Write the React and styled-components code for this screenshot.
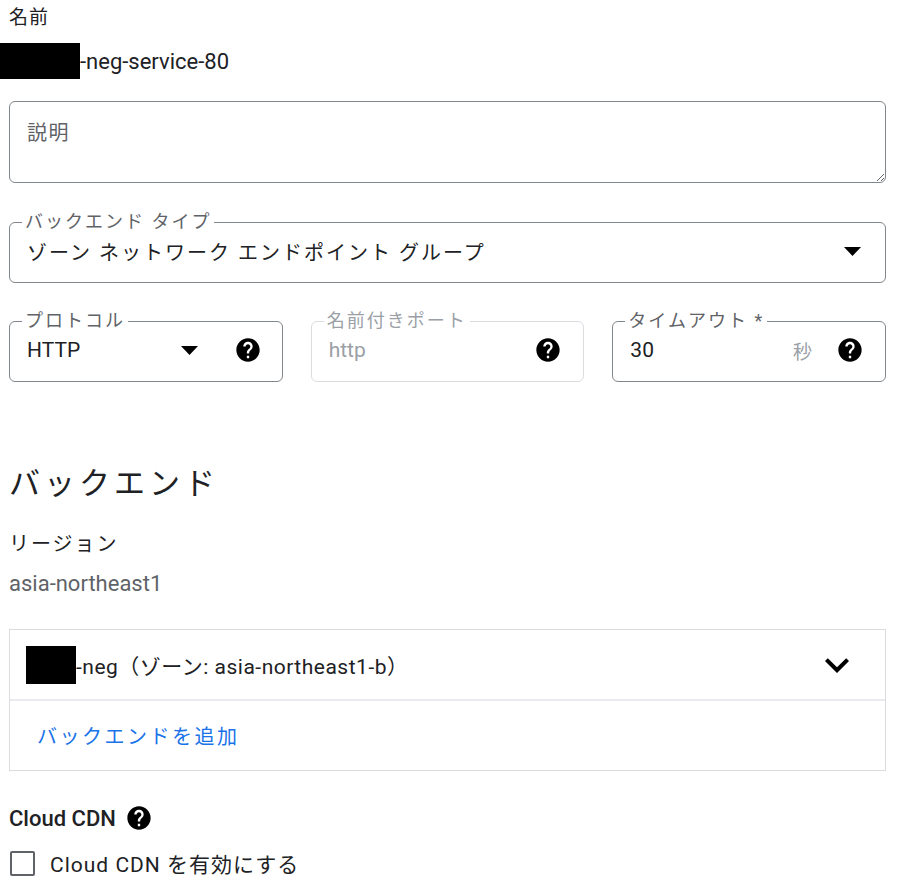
import React from 'react'
import styled, { createGlobalStyle } from 'styled-components'

const GlobalStyle = createGlobalStyle`
  html, body {
    margin: 0;
    padding: 0;
    background: #ffffff;
  }
  body {
    font-family: Roboto, "Noto Sans CJK JP", sans-serif;
    color: #202124;
  }
`

const Page = styled.div`
  width: 877px;
  padding-left: 9px;
  padding-bottom: 10px;
`

const FieldLabel = styled.div`
  margin-top: 4px;
  line-height: 28px;
  font-size: 19px;
  letter-spacing: 1px;
  color: #202124;
`

const NameRow = styled.div`
  display: flex;
  align-items: center;
  height: 36px;
  margin: 11px 0 0 -9px;
  font-size: 22px;
  color: #202124;
`

const Redacted = styled.span`
  display: inline-block;
  width: ${p => p.$w}px;
  height: ${p => p.$h}px;
  background: #000;
`

const TextArea = styled.textarea`
  display: block;
  box-sizing: border-box;
  width: 100%;
  height: 82px;
  margin-top: 22px;
  padding: 19px 17px;
  border: 1px solid #80868b;
  border-radius: 6px;
  font-family: Roboto, "Noto Sans CJK JP", sans-serif;
  font-size: 20px;
  line-height: 24px;
  letter-spacing: 1.5px;
  color: #202124;
  outline: none;
  &::placeholder {
    color: #5f6368;
  }
`

const Outlined = styled.fieldset`
  box-sizing: border-box;
  margin: ${p => p.$top}px 0 0 0;
  padding: 0 ${p => p.$right}px 13px 17px;
  min-width: 0;
  border: 1px solid ${p => (p.$disabled ? '#dadce0' : '#80868b')};
  border-radius: 6px;
`

const Legend = styled.legend`
  margin-left: -5px;
  padding: 0 3px;
  line-height: 22px;
  font-size: 18px;
  letter-spacing: 2px;
  color: ${p => (p.$disabled ? '#9aa0a6' : '#5f6368')};
`

const FieldBody = styled.div`
  display: flex;
  align-items: center;
  height: 36px;
  gap: ${p => p.$gap || 0}px;
`

const Value = styled.div`
  flex: 1;
  font-size: ${p => p.$size || 21}px;
  letter-spacing: ${p => p.$ls || 0}px;
  color: ${p => (p.$muted ? '#9aa0a6' : '#202124')};
  white-space: nowrap;
`

const Suffix = styled.span`
  font-size: 19px;
  color: #9aa0a6;
  margin-right: 24px;
`

const ThreeCols = styled.div`
  display: grid;
  grid-template-columns: 1fr 1fr 1fr;
  gap: 28px;
`

const Heading = styled.h2`
  margin: 82px 0 0 0;
  font-weight: 400;
  font-size: 31px;
  line-height: 40px;
  letter-spacing: 4px;
  color: #202124;
`

const SubHeading = styled.div`
  margin-top: 26px;
  font-size: 20px;
  line-height: 28px;
  letter-spacing: 2px;
  color: #202124;
`

const Muted = styled.div`
  margin-top: 13px;
  font-size: 22px;
  line-height: 26px;
  color: #5f6368;
`

const Panel = styled.div`
  margin-top: 32px;
  border: 1px solid #dadce0;
`

const PanelRow = styled.div`
  display: flex;
  align-items: center;
  height: 69px;
  padding: 0 24px 0 ${p => p.$left}px;
  border-bottom: ${p => (p.$divider ? '2px solid #e8eaed' : 'none')};
`

const BackendName = styled.div`
  flex: 1;
  display: flex;
  align-items: center;
  font-size: 21px;
  letter-spacing: 0.5px;
  color: #202124;
`

const AddLink = styled.a`
  font-size: 20px;
  letter-spacing: 2.5px;
  color: #1a73e8;
  text-decoration: none;
  cursor: pointer;
`

const CdnTitle = styled.div`
  display: flex;
  align-items: center;
  gap: 9px;
  margin-top: 33px;
  height: 28px;
  font-size: 22px;
  font-weight: 500;
  color: #202124;
`

const CheckRow = styled.label`
  display: flex;
  align-items: center;
  gap: 15px;
  margin-top: 15px;
  height: 32px;
  font-size: 21px;
  letter-spacing: 1px;
  color: #202124;
`

const CheckBox = styled.span`
  box-sizing: border-box;
  width: 25px;
  height: 25px;
  border: 2px solid #5f6368;
  border-radius: 2px;
  margin-left: 1px;
`

const IconSvg = styled.svg`
  flex: none;
  display: block;
`

function HelpIcon({ size = 28 }) {
  return (
    <IconSvg width={size} height={size} viewBox="0 0 24 24" fill="#000">
      <path d="M12 2C6.48 2 2 6.48 2 12s4.48 10 10 10 10-4.48 10-10S17.52 2 12 2zm1 17h-2v-2h2v2zm2.07-7.75l-.9.92C13.45 12.9 13 13.5 13 15h-2v-.5c0-1.1.45-2.1 1.17-2.83l1.24-1.26c.37-.36.59-.86.59-1.41 0-1.1-.9-2-2-2s-2 .9-2 2H8c0-2.21 1.79-4 4-4s4 1.79 4 4c0 .88-.36 1.68-.93 2.25z" />
    </IconSvg>
  )
}

function DropArrow() {
  return (
    <IconSvg width="17" height="9" viewBox="0 0 17 9" fill="#000">
      <polygon points="0,0 17,0 8.5,9" />
    </IconSvg>
  )
}

function ExpandMore() {
  return (
    <IconSvg width="48" height="48" viewBox="0 0 24 24" fill="#000">
      <path d="M16.59 8.59L12 13.17 7.41 8.59 6 10l6 6 6-6z" />
    </IconSvg>
  )
}

export default function App() {
  return (
    <Page>
      <GlobalStyle />
      <FieldLabel>名前</FieldLabel>
      <NameRow>
        <Redacted $w={80} $h={36} />
        <span>-neg-service-80</span>
      </NameRow>

      <TextArea placeholder="説明" />

      <Outlined $top={28} $right={24}>
        <Legend>バックエンド タイプ</Legend>
        <FieldBody>
          <Value $size={20} $ls={2}>ゾーン ネットワーク エンドポイント グループ</Value>
          <DropArrow />
        </FieldBody>
      </Outlined>

      <ThreeCols>
        <Outlined $top={27} $right={20}>
          <Legend>プロトコル</Legend>
          <FieldBody $gap={36}>
            <Value>HTTP</Value>
            <DropArrow />
            <HelpIcon />
          </FieldBody>
        </Outlined>
        <Outlined $top={27} $right={21} $disabled>
          <Legend $disabled>名前付きポート</Legend>
          <FieldBody>
            <Value $muted>http</Value>
            <HelpIcon />
          </FieldBody>
        </Outlined>
        <Outlined $top={27} $right={21}>
          <Legend>タイムアウト *</Legend>
          <FieldBody>
            <Value>30</Value>
            <Suffix>秒</Suffix>
            <HelpIcon />
          </FieldBody>
        </Outlined>
      </ThreeCols>

      <Heading>バックエンド</Heading>
      <SubHeading>リージョン</SubHeading>
      <Muted>asia-northeast1</Muted>

      <Panel>
        <PanelRow $left={16} $divider>
          <BackendName>
            <Redacted $w={50} $h={38} />
            <span>-neg（ゾーン: asia-northeast1-b）</span>
          </BackendName>
          <ExpandMore />
        </PanelRow>
        <PanelRow $left={27}>
          <AddLink>バックエンドを追加</AddLink>
        </PanelRow>
      </Panel>

      <CdnTitle>
        Cloud CDN
        <HelpIcon />
      </CdnTitle>
      <CheckRow>
        <CheckBox />
        Cloud CDN を有効にする
      </CheckRow>
    </Page>
  )
}
